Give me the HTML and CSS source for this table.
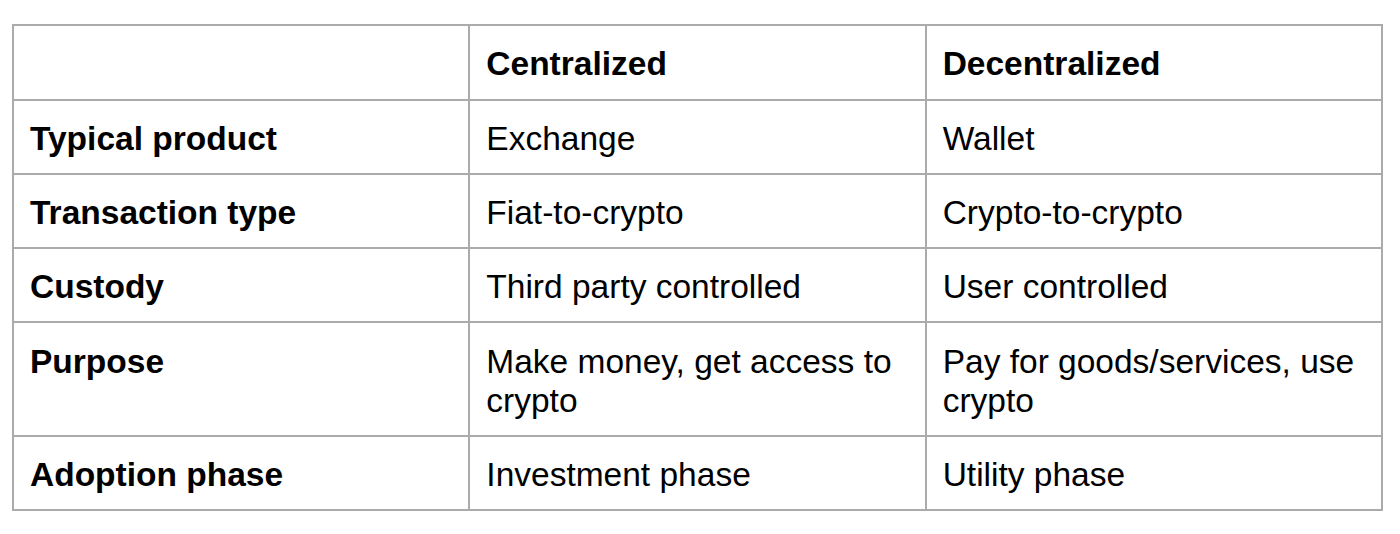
FILE: index.html
```html
<!DOCTYPE html>
<html>
<head>
<meta charset="utf-8">
<link rel="stylesheet" href="styles.css">
</head>
<body>
<table class="cmp">
  <colgroup><col class="c"><col class="c"><col class="c"></colgroup>
  <thead>
    <tr class="head"><th></th><th>Centralized</th><th>Decentralized</th></tr>
  </thead>
  <tbody>
    <tr><th>Typical product</th><td>Exchange</td><td>Wallet</td></tr>
    <tr><th>Transaction type</th><td>Fiat-to-crypto</td><td>Crypto-to-crypto</td></tr>
    <tr><th>Custody</th><td>Third party controlled</td><td>User controlled</td></tr>
    <tr class="tall"><th>Purpose</th><td>Make money, get access to crypto</td><td>Pay for goods/services, use crypto</td></tr>
    <tr><th>Adoption phase</th><td>Investment phase</td><td>Utility phase</td></tr>
  </tbody>
</table>
</body>
</html>
```
FILE: styles.css
```css
html, body { margin: 0; padding: 0; background: #fff; }
body { padding: 24px 0 0 12px; }
.cmp {
  border-collapse: collapse;
  table-layout: fixed;
  width: 1371px;
  font-family: "Liberation Sans", Arial, sans-serif;
  font-size: 33.5px;
  line-height: 38px;
  color: #000;
}
.cmp th, .cmp td {
  border: 2px solid #ababab;
  padding: 19px 16px 15px 16px;
  text-align: left;
  vertical-align: top;
}
.cmp th { font-weight: bold; }
.cmp td { font-weight: normal; }
.cmp .head th { padding-bottom: 16px; }
.cmp .tall th, .cmp .tall td { line-height: 39px; padding-bottom: 15px; }
```
